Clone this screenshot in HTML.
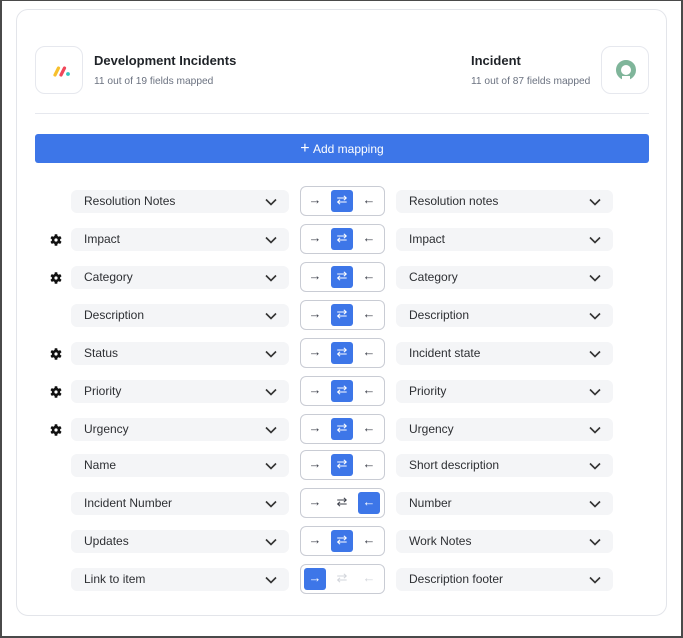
<!DOCTYPE html>
<html><head><meta charset="utf-8"><style>
*{box-sizing:border-box;margin:0;padding:0}
body{width:683px;height:638px;background:#fff;font-family:"Liberation Sans",sans-serif;position:relative;overflow:hidden}
.frame{position:absolute;left:0;top:0;width:683px;height:638px;border:2px solid #4a4a4a;border-top-width:1px;pointer-events:none}
.card{position:absolute;left:16px;top:9px;width:651px;height:607px;border:1px solid #e3e5ea;border-radius:12px}
.logo{position:absolute;width:48px;height:48px;border:1px solid #e6e8ee;border-radius:10px;background:#fff}
.t{position:absolute;font-size:13px;font-weight:bold;color:#1f2328}
.s{position:absolute;font-size:10.2px;color:#6b7280}
.sel{position:absolute;height:23px;background:#f4f5f7;border-radius:6px;font-size:12px;color:#2d2f33;padding-left:13px;line-height:23px}
.sel svg{position:absolute;right:12px;top:8px}
.tg{position:absolute;left:300px;width:85px;height:30px;border:1px solid #c9ccd4;border-radius:6px;background:#fff}
.tg span{position:absolute;top:3px;width:22px;height:22px;border-radius:3px;text-align:center;line-height:20px;font-size:13px;color:#3b3f4a}
.tg .on{background:#3d76e8;color:#fff}
.tg .off{color:#d2d5db}
.gear{position:absolute;left:50px}
</style></head><body>
<div class="card"></div>
<div class="logo" style="left:35px;top:46px"><svg width="48" height="48"><line x1="19" y1="28" x2="22.5" y2="21" stroke="#f7c02d" stroke-width="3.2" stroke-linecap="round"/><line x1="25" y1="28" x2="28.5" y2="21" stroke="#f0475a" stroke-width="3.2" stroke-linecap="round"/><circle cx="32" cy="27" r="1.9" fill="#34c6c0"/></svg></div>
<div class="t" style="left:94px;top:53px">Development Incidents</div>
<div class="s" style="left:94px;top:76px">11 out of 19 fields mapped</div>
<div class="t" style="left:471px;top:53px">Incident</div>
<div class="s" style="left:471px;top:76px">11 out of 87 fields mapped</div>
<div class="logo" style="left:601px;top:46px"><svg width="48" height="48"><circle cx="24" cy="23" r="7.5" fill="none" stroke="#7fb59a" stroke-width="5"/><rect x="20" y="29" width="8" height="4" fill="#fff"/></svg></div>
<div style="position:absolute;left:35px;top:113px;width:614px;height:1px;background:#e6e8ee"></div>
<div style="position:absolute;left:35px;top:134px;width:614px;height:29px;background:#3d76e8;border-radius:3px;color:#fff;font-size:12px;text-align:center;line-height:29px"><span style="font-size:16px">+</span>&nbsp;Add mapping</div>

<div id="rows"></div>
<div class="frame"></div>
<script>
var d=[[201,"Resolution Notes","Resolution notes",0,1],[239,"Impact","Impact",1,1],[277,"Category","Category",1,1],[315,"Description","Description",0,1],[353,"Status","Incident state",1,1],[391,"Priority","Priority",1,1],[429,"Urgency","Urgency",1,1],[465,"Name","Short description",0,1],[503,"Incident Number","Number",0,2],[541,"Updates","Work Notes",0,1],[579,"Link to item","Description footer",0,0]];
var chev='<svg width="12" height="8"><path d="M1 1.5L6 6.5L11 1.5" fill="none" stroke="#333" stroke-width="1.6"/></svg>';
var gear='<svg width="12" height="12" viewBox="0 0 12 12"><g fill="#111"><rect x="4.6" y="0.3" width="2.8" height="11.4" rx="0.6"/><rect x="4.6" y="0.3" width="2.8" height="11.4" rx="0.6" transform="rotate(60 6 6)"/><rect x="4.6" y="0.3" width="2.8" height="11.4" rx="0.6" transform="rotate(120 6 6)"/><circle cx="6" cy="6" r="4.2"/></g><circle cx="6" cy="6" r="1.6" fill="#fff"/></svg>';
var h='';
d.forEach(function(r){var c=r[0];
h+='<div class="sel" style="left:71px;width:218px;top:'+(c-11.5)+'px">'+r[1]+chev+'</div>';
h+='<div class="sel" style="left:396px;width:217px;top:'+(c-11.5)+'px">'+r[2]+chev+'</div>';
if(r[3])h+='<div class="gear" style="top:'+(c-6)+'px">'+gear+'</div>';
var a=r[4];
h+='<div class="tg" style="top:'+(c-15)+'px"><span style="left:3px" class="'+(a==0?'on':'')+'">→</span><span style="left:30px" class="'+(a==1?'on':(a==0?'off':''))+'">⇄</span><span style="left:57px" class="'+(a==2?'on':(a==0?'off':''))+'">←</span></div>';
});
document.getElementById('rows').innerHTML=h;
</script>
</body></html>
